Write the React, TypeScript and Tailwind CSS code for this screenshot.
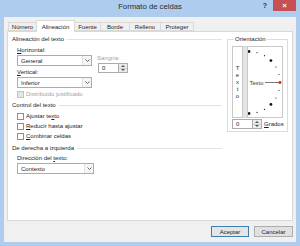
import React from "react";

function Chevron() {
  return (
    <svg width="5" height="3" viewBox="0 0 5 3">
      <path d="M0.5 0.5 L2.5 2.5 L4.5 0.5" fill="none" stroke="#555" strokeWidth="0.9" />
    </svg>
  );
}

function Select({ value, w }: { value: string; w: string }) {
  return (
    <div className={`${w} h-[11px] flex border border-[#acacac] bg-white`}>
      <div className="flex-1 flex items-center pl-[3px] leading-none">{value}</div>
      <div className="w-[9px] flex items-center justify-center border-l border-[#e0e0e0] bg-[#f6f6f6]">
        <Chevron />
      </div>
    </div>
  );
}

function Spin({ w }: { w: string }) {
  return (
    <div className="h-[10px] flex">
      <div className={`${w} border border-[#acacac] bg-white flex items-center pl-[3px] leading-none`}>0</div>
      <div className="w-[9px] flex flex-col border border-l-0 border-[#acacac] bg-[#ececec]">
        <div className="flex-1 flex items-center justify-center border-b border-[#cfcfcf]">
          <svg width="4" height="2" viewBox="0 0 4 2"><path d="M0 2 L2 0 L4 2 Z" fill="#555" /></svg>
        </div>
        <div className="flex-1 flex items-center justify-center">
          <svg width="4" height="2" viewBox="0 0 4 2"><path d="M0 0 L2 2 L4 0 Z" fill="#555" /></svg>
        </div>
      </div>
    </div>
  );
}

function Header({ children }: { children: React.ReactNode }) {
  return (
    <div className="h-[8px] flex items-center leading-none">
      <span>{children}</span>
      <div className="flex-1 h-px bg-[#e3e3e3] ml-[3px]" />
    </div>
  );
}

function Check({ children, disabled }: { children: React.ReactNode; disabled?: boolean }) {
  return (
    <div className="h-[10px] flex items-center leading-none">
      <div
        className={
          disabled
            ? "w-[7px] h-[7px] border border-[#c4c4c4] bg-[#e6e6e6] mr-[2px]"
            : "w-[7px] h-[7px] border border-[#8e8e8e] bg-white mr-[2px]"
        }
      />
      <span className={disabled ? "text-[#a3a3a3]" : ""}>{children}</span>
    </div>
  );
}

function Dial() {
  const cx = 1;
  const cy = 35.5;
  const r = 31;
  const dots: React.ReactNode[] = [];
  for (let a = 90; a >= -90; a -= 15) {
    if (a === 0) continue;
    const rad = (a * Math.PI) / 180;
    const x = cx + r * Math.cos(rad);
    const y = cy - r * Math.sin(rad);
    const big = a % 45 === 0;
    dots.push(<circle key={a} cx={x} cy={y} r={big ? 1.4 : 0.6} fill="#111" />);
  }
  return (
    <svg width="34" height="70" viewBox="0 0 34 70" className="block">
      {dots}
      <text x="1.5" y="37.6" fontSize="5.8" fill="#333" fontFamily="Liberation Sans, Arial, sans-serif">
        Texto
      </text>
      <line x1="17" y1="35.5" x2="31" y2="35.5" stroke="#555" strokeWidth="0.8" />
      <circle cx={cx + r} cy={cy} r="1.4" fill="#e0201a" />
    </svg>
  );
}

function Tab({ label, w, active }: { label: string; w: string; active?: boolean }) {
  return active ? (
    <div
      className={`${w} h-[12px] -mb-px bg-white border border-b-0 border-[#d9d9d9] flex items-center justify-center leading-none z-10`}
    >
      {label}
    </div>
  ) : (
    <div
      className={`${w} h-[9px] bg-[#f0f0f0] border border-[#d9d9d9] -ml-px flex items-center justify-center leading-none`}
    >
      {label}
    </div>
  );
}

export default function App() {
  return (
    <div className="w-[300px] h-[246px] bg-[#aecdee] flex flex-col overflow-hidden font-['Liberation_Sans',Arial,sans-serif] text-[6px] text-[#1e1e1e]">
      {/* title bar */}
      <div className="h-[17px] grid grid-cols-[1fr_auto_1fr]">
        <div />
        <div className="text-[7.7px] text-[#2b2b2b] pt-[3px] leading-none">Formato de celdas</div>
        <div className="flex justify-end items-start pr-[4px]">
          <div className="text-[7px] text-[#333] pt-[2px] mr-[6px] leading-none font-bold">?</div>
          <div className="w-[23px] h-[11px] bg-[#c75050] flex items-center justify-center text-white text-[8px] leading-none font-bold">
            ×
          </div>
        </div>
      </div>

      {/* body */}
      <div className="flex-1 mx-[4px] mb-[4px] bg-[#f0f0f0] flex flex-col px-[3px] pt-[4px]">
        {/* tabs */}
        <div className="h-[10px] flex items-end pl-[2px]">
          <Tab label="Número" w="w-[29px]" />
          <Tab label="Alineación" w="w-[39px] -ml-px" active />
          <Tab label="Fuente" w="w-[27px]" />
          <Tab label="Borde" w="w-[30px]" />
          <Tab label="Relleno" w="w-[32px]" />
          <Tab label="Proteger" w="w-[34px]" />
        </div>

        {/* panel */}
        <div className="h-[190px] bg-white border border-[#d9d9d9] flex">
          {/* left column */}
          <div className="w-[214px] pl-[4px] pt-[3px] flex flex-col">
            <Header>Alineación del texto</Header>
            <div className="pl-[5px] flex">
              <div className="w-[75px] flex flex-col">
                <div className="h-[8px] mt-[3px] flex items-center leading-none">
                  <span><u>H</u>orizontal:</span>
                </div>
                <div className="mt-[1px]">
                  <Select value="General" w="w-[75px]" />
                </div>
                <div className="h-[8px] mt-[2px] flex items-center leading-none">
                  <span><u>V</u>ertical:</span>
                </div>
                <div className="mt-[1px]">
                  <Select value="Inferior" w="w-[75px]" />
                </div>
              </div>
              <div className="ml-[5px] pt-[11px] flex flex-col">
                <div className="h-[8px] flex items-center leading-none text-[#a3a3a3]">Sangría:</div>
                <div className="mt-[1px] ml-[1px]">
                  <Spin w="w-[21px]" />
                </div>
              </div>
            </div>
            <div className="pl-[5px] mt-[1px]">
              <Check disabled>Distribuido justificado</Check>
            </div>
            <div className="mt-[2px]">
              <Header>Control del texto</Header>
            </div>
            <div className="pl-[5px] mt-[2px] flex flex-col">
              <Check>Ajustar te<u>x</u>to</Check>
              <Check><u>R</u>educir hasta ajustar</Check>
              <Check><u>C</u>ombinar celdas</Check>
            </div>
            <div className="mt-[3px]">
              <Header>De derecha a izquierda</Header>
            </div>
            <div className="pl-[5px] flex flex-col">
              <div className="h-[8px] mt-[2px] flex items-center leading-none">
                <span>Dirección del <u>t</u>exto:</span>
              </div>
              <div className="mt-[1px]">
                <Select value="Contexto" w="w-[77px]" />
              </div>
            </div>
          </div>

          {/* right column: Orientación */}
          <div className="ml-[5px] pt-[3px]">
            <fieldset className="w-[60px] border border-[#dcdcdc] pl-[4px] pr-[3px] pb-[2px]">
              <legend className="ml-[2px] px-[1px] h-[8px] leading-[8px]">Orientación</legend>
              <div className="mt-[3px] flex h-[72px]">
                <div className="w-[11px] border border-[#c8c8c8] bg-white flex flex-col items-center justify-center text-[#333]">
                  {"Texto".split("").map((c, i) => (
                    <div key={i} className="h-[7px] leading-[7px]">{c}</div>
                  ))}
                </div>
                <div className="w-[4px] bg-[#e4e4e4] border-y border-[#d4d4d4]" />
                <div className="w-[36px] border border-[#c8c8c8] bg-white">
                  <Dial />
                </div>
              </div>
              <div className="mt-[1px] flex items-center">
                <Spin w="w-[21px]" />
                <span className="ml-[2px] leading-none"><u>G</u>rados</span>
              </div>
            </fieldset>
          </div>
        </div>

        {/* buttons */}
        <div className="flex-1 flex items-center justify-end pr-[0px] gap-[5px]">
          <div className="w-[38px] h-[11px] border border-[#3c7fb1] bg-[#e5e5e5] flex items-center justify-center leading-none">
            Aceptar
          </div>
          <div className="w-[39px] h-[11px] border border-[#adadad] bg-[#e1e1e1] flex items-center justify-center leading-none">
            Cancelar
          </div>
        </div>
      </div>
    </div>
  );
}
